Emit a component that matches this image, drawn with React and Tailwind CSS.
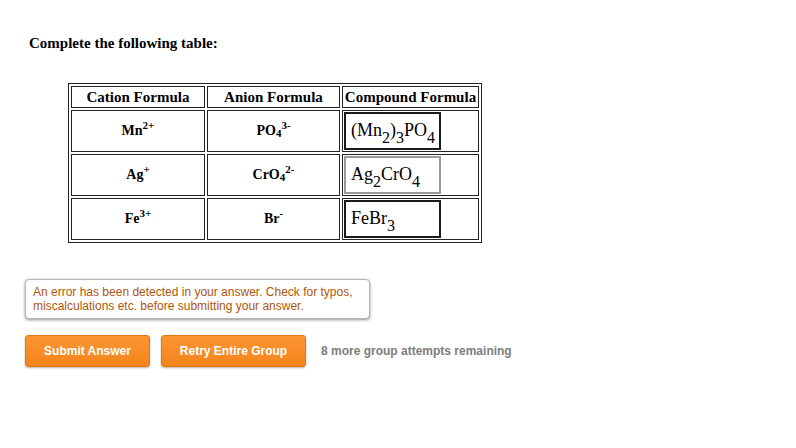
const serif = { fontFamily: '"Liberation Serif", "Times New Roman", serif' };

const ROWS = [
  {
    cation: <>Mn<Sup>2+</Sup></>,
    anion: <>PO<SubS>4</SubS><Sup>3-</Sup></>,
    answer: <>(Mn<Sub>2</Sub>)<Sub>3</Sub>PO<Sub>4</Sub></>,
    box: 'border-[#1a1a1a]',
  },
  {
    cation: <>Ag<Sup>+</Sup></>,
    anion: <>CrO<SubS>4</SubS><Sup>2-</Sup></>,
    answer: <>Ag<Sub>2</Sub>CrO<Sub>4</Sub></>,
    box: 'border-[#9a9a9a]',
  },
  {
    cation: <>Fe<Sup>3+</Sup></>,
    anion: <>Br<Sup>-</Sup></>,
    answer: <>FeBr<Sub>3</Sub></>,
    box: 'border-[#1a1a1a]',
  },
];

function Sup({ children }) {
  return <span className="relative -top-[6px] text-[11px]">{children}</span>;
}

function SubS({ children }) {
  return <span className="relative top-[2px] text-[11px]">{children}</span>;
}

function Sub({ children }) {
  return <span className="relative top-[7px] text-[16px]">{children}</span>;
}

export default function App() {
  return (
    <div className="min-h-[448px] w-[796px] bg-white pl-[25px] pt-[35px] text-black">
      <h1 className="ml-[4px] text-[15px] font-bold leading-[17px]" style={serif}>
        Complete the following table:
      </h1>

      <table
        className="ml-[43px] mt-[31px] table-fixed border border-separate border-spacing-[2px] border-[#222]"
        style={serif}
      >
        <thead>
          <tr className="h-[22px] text-[15px] font-bold">
            <th className="w-[134px] border border-[#222] p-0 leading-[17px]">Cation Formula</th>
            <th className="w-[133px] border border-[#222] p-0 leading-[17px]">Anion Formula</th>
            <th className="w-[137px] border border-[#222] p-0 leading-[17px] whitespace-nowrap">Compound Formula</th>
          </tr>
        </thead>
        <tbody>
          {ROWS.map((r, i) => (
            <tr key={i} className="h-[42px] text-[14px] font-bold">
              <td className="border border-[#222] p-0 text-center leading-[16px]">{r.cation}</td>
              <td className="border border-[#222] p-0 text-center leading-[16px]">{r.anion}</td>
              <td className="border border-[#222] px-[1px] pt-[1px] align-top">
                <div className={`flex h-[38px] w-[97px] items-start border-2 pl-[5px] pt-[6px] text-[18px] font-normal leading-[20px] ${r.box}`}>
                  <span className="whitespace-nowrap">{r.answer}</span>
                </div>
              </td>
            </tr>
          ))}
        </tbody>
      </table>

      <div
        className="mt-[36px] w-[345px] rounded-[4px] border border-[#b5b5b5] bg-white px-[7px] py-[5px] text-[12px] leading-[14px] text-[#b0560a] shadow-[0_1px_3px_rgba(0,0,0,0.45)]"
        style={{ fontFamily: '"Liberation Sans", Arial, sans-serif' }}
      >
        An error has been detected in your answer. Check for typos, miscalculations etc. before submitting your answer.
      </div>

      <div
        className="mt-[16px] flex items-center text-[12px] font-bold"
        style={{ fontFamily: '"Liberation Sans", Arial, sans-serif' }}
      >
        <button className="h-[32px] w-[125px] rounded-[3px] border border-[#e07810] bg-gradient-to-b from-[#fb9532] to-[#f5841a] text-white shadow-[0_1px_2px_rgba(0,0,0,0.3)]">
          Submit Answer
        </button>
        <button className="ml-[11px] h-[32px] w-[145px] rounded-[3px] border border-[#e07810] bg-gradient-to-b from-[#fb9532] to-[#f5841a] text-white shadow-[0_1px_2px_rgba(0,0,0,0.3)]">
          Retry Entire Group
        </button>
        <span className="ml-[15px] text-[#7d7d7d]">8 more group attempts remaining</span>
      </div>
    </div>
  );
}
